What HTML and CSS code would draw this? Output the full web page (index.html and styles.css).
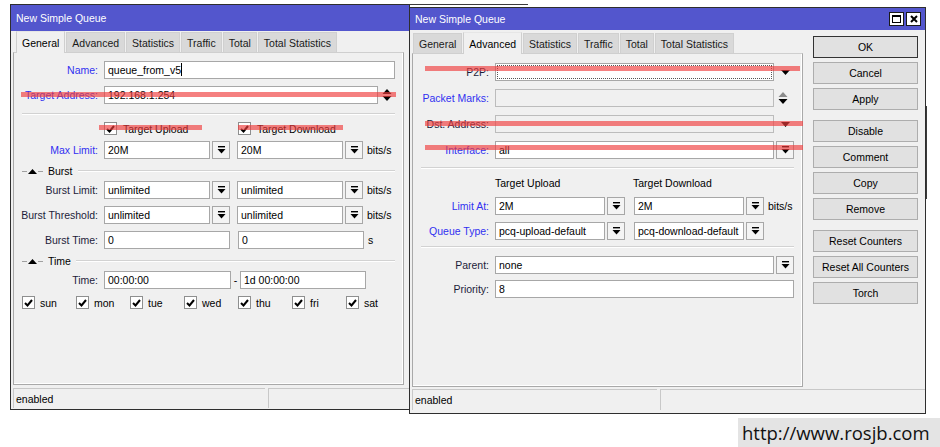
FILE: index.html
```html
<!DOCTYPE html>
<html lang="en">
<head>
    <meta charset="UTF-8">
    <title>New Simple Queue</title>
    <link rel="stylesheet" href="styles.css">
</head>
<body>
<div class="desktop">
    <!-- edges of windows behind -->
    <div class="behind behind-top"></div>
    <div class="behind behind-right"></div>

    <!-- left window : General tab -->
    <div class="window win-general">
        <div class="titlebar">New Simple Queue</div>
        <div class="tabs">
            <div class="tab active">General</div>
            <div class="tab">Advanced</div>
            <div class="tab">Statistics</div>
            <div class="tab">Traffic</div>
            <div class="tab">Total</div>
            <div class="tab">Total Statistics</div>
        </div>
        <div class="panel">
            <div class="row">
                <div class="lbl link">Name:</div>
                <div class="field w-291">queue_from_v5<span class="caret"></span></div>
            </div>
            <div class="row">
                <div class="lbl link">Target Address:</div>
                <div class="field w-274">192.168.1.254</div>
                <svg class="updown" width="10" height="14" viewBox="0 0 10 14"><path d="M5 1l4.5 5h-9z"/><path d="M5 13l4.5-5h-9z"/></svg>
            </div>
            <div class="sep"></div>
            <div class="checks">
                <div class="check w-134">
                    <div class="cb"><svg width="9" height="8" viewBox="0 0 9 8"><path d="M1 4l2.5 2.5L8 1"/></svg></div>
                    <span>Target Upload</span>
                </div>
                <div class="check">
                    <div class="cb"><svg width="9" height="8" viewBox="0 0 9 8"><path d="M1 4l2.5 2.5L8 1"/></svg></div>
                    <span>Target Download</span>
                </div>
            </div>
            <div class="row">
                <div class="lbl link">Max Limit:</div>
                <div class="field w-106">20M</div>
                <div class="ddbtn"><svg width="9" height="8" viewBox="0 0 9 8"><rect x="1" y="0" width="7" height="1.4"/><path d="M0.5 3h8l-4 4.5z"/></svg></div>
                <div class="field w-106 gap">20M</div>
                <div class="ddbtn"><svg width="9" height="8" viewBox="0 0 9 8"><rect x="1" y="0" width="7" height="1.4"/><path d="M0.5 3h8l-4 4.5z"/></svg></div>
                <div class="unit">bits/s</div>
            </div>
            <div class="group">
                <div class="dash"></div>
                <svg width="9" height="5" viewBox="0 0 9 5"><path d="M0 5h9L4.5 0z"/></svg>
                <div class="dash"></div>
                <span>Burst</span>
                <div class="group-line"></div>
            </div>
            <div class="row">
                <div class="lbl">Burst Limit:</div>
                <div class="field w-106">unlimited</div>
                <div class="ddbtn"><svg width="9" height="8" viewBox="0 0 9 8"><rect x="1" y="0" width="7" height="1.4"/><path d="M0.5 3h8l-4 4.5z"/></svg></div>
                <div class="field w-106 gap">unlimited</div>
                <div class="ddbtn"><svg width="9" height="8" viewBox="0 0 9 8"><rect x="1" y="0" width="7" height="1.4"/><path d="M0.5 3h8l-4 4.5z"/></svg></div>
                <div class="unit">bits/s</div>
            </div>
            <div class="row">
                <div class="lbl">Burst Threshold:</div>
                <div class="field w-106">unlimited</div>
                <div class="ddbtn"><svg width="9" height="8" viewBox="0 0 9 8"><rect x="1" y="0" width="7" height="1.4"/><path d="M0.5 3h8l-4 4.5z"/></svg></div>
                <div class="field w-106 gap">unlimited</div>
                <div class="ddbtn"><svg width="9" height="8" viewBox="0 0 9 8"><rect x="1" y="0" width="7" height="1.4"/><path d="M0.5 3h8l-4 4.5z"/></svg></div>
                <div class="unit">bits/s</div>
            </div>
            <div class="row">
                <div class="lbl">Burst Time:</div>
                <div class="field w-126">0</div>
                <div class="field w-126 gap">0</div>
                <div class="unit">s</div>
            </div>
            <div class="group">
                <div class="dash"></div>
                <svg width="9" height="5" viewBox="0 0 9 5"><path d="M0 5h9L4.5 0z"/></svg>
                <div class="dash"></div>
                <span>Time</span>
                <div class="group-line"></div>
            </div>
            <div class="row">
                <div class="lbl">Time:</div>
                <div class="field w-127">00:00:00</div>
                <div class="dash-text">-</div>
                <div class="field w-126">1d 00:00:00</div>
            </div>
            <div class="days">
                <div class="check day"><div class="cb"><svg width="9" height="8" viewBox="0 0 9 8"><path d="M1 4l2.5 2.5L8 1"/></svg></div><span>sun</span></div>
                <div class="check day"><div class="cb"><svg width="9" height="8" viewBox="0 0 9 8"><path d="M1 4l2.5 2.5L8 1"/></svg></div><span>mon</span></div>
                <div class="check day"><div class="cb"><svg width="9" height="8" viewBox="0 0 9 8"><path d="M1 4l2.5 2.5L8 1"/></svg></div><span>tue</span></div>
                <div class="check day"><div class="cb"><svg width="9" height="8" viewBox="0 0 9 8"><path d="M1 4l2.5 2.5L8 1"/></svg></div><span>wed</span></div>
                <div class="check day"><div class="cb"><svg width="9" height="8" viewBox="0 0 9 8"><path d="M1 4l2.5 2.5L8 1"/></svg></div><span>thu</span></div>
                <div class="check day"><div class="cb"><svg width="9" height="8" viewBox="0 0 9 8"><path d="M1 4l2.5 2.5L8 1"/></svg></div><span>fri</span></div>
                <div class="check day"><div class="cb"><svg width="9" height="8" viewBox="0 0 9 8"><path d="M1 4l2.5 2.5L8 1"/></svg></div><span>sat</span></div>
            </div>
        </div>
        <div class="statusbar">
            <div class="status-cell first">enabled</div>
            <div class="status-cell"></div>
        </div>
    </div>

    <!-- right window : Advanced tab -->
    <div class="window win-advanced">
        <div class="titlebar">
            <span>New Simple Queue</span>
            <div class="title-buttons">
                <div class="tbtn"><div class="max-box"></div></div>
                <div class="tbtn"><svg width="8" height="8" viewBox="0 0 8 8"><path d="M1 1l6 6M7 1l-6 6"/></svg></div>
            </div>
        </div>
        <div class="win-body">
            <div class="main-col">
                <div class="tabs">
                    <div class="tab">General</div>
                    <div class="tab active">Advanced</div>
                    <div class="tab">Statistics</div>
                    <div class="tab">Traffic</div>
                    <div class="tab">Total</div>
                    <div class="tab">Total Statistics</div>
                </div>
                <div class="panel">
                    <div class="row r26">
                        <div class="lbl">P2P:</div>
                        <div class="field w-279 focus"><div class="focus-ring"></div></div>
                        <svg class="arrow" width="9" height="5" viewBox="0 0 9 5"><path d="M0 0h9L4.5 5z"/></svg>
                    </div>
                    <div class="row r26">
                        <div class="lbl link">Packet Marks:</div>
                        <div class="field w-279 disabled"></div>
                        <svg class="updown" width="10" height="14" viewBox="0 0 10 14"><path d="M5 1l4.5 5h-9z" fill="#8c8c8c"/><path d="M5 13l4.5-5h-9z"/></svg>
                    </div>
                    <div class="row r26">
                        <div class="lbl">Dst. Address:</div>
                        <div class="field w-279 disabled"></div>
                        <svg class="arrow" width="9" height="5" viewBox="0 0 9 5"><path d="M0 0h9L4.5 5z"/></svg>
                    </div>
                    <div class="row r26">
                        <div class="lbl link">Interface:</div>
                        <div class="field w-279">all</div>
                        <div class="ddbtn"><svg width="9" height="8" viewBox="0 0 9 8"><rect x="1" y="0" width="7" height="1.4"/><path d="M0.5 3h8l-4 4.5z"/></svg></div>
                    </div>
                    <div class="sep sep-r"></div>
                    <div class="heads">
                        <div class="head w-138">Target Upload</div>
                        <div class="head">Target Download</div>
                    </div>
                    <div class="row">
                        <div class="lbl link">Limit At:</div>
                        <div class="field w-110">2M</div>
                        <div class="ddbtn"><svg width="9" height="8" viewBox="0 0 9 8"><rect x="1" y="0" width="7" height="1.4"/><path d="M0.5 3h8l-4 4.5z"/></svg></div>
                        <div class="field w-110 gap-r">2M</div>
                        <div class="ddbtn"><svg width="9" height="8" viewBox="0 0 9 8"><rect x="1" y="0" width="7" height="1.4"/><path d="M0.5 3h8l-4 4.5z"/></svg></div>
                        <div class="unit">bits/s</div>
                    </div>
                    <div class="row">
                        <div class="lbl link">Queue Type:</div>
                        <div class="field w-110">pcq-upload-default</div>
                        <div class="ddbtn"><svg width="9" height="8" viewBox="0 0 9 8"><rect x="1" y="0" width="7" height="1.4"/><path d="M0.5 3h8l-4 4.5z"/></svg></div>
                        <div class="field w-110 gap-r">pcq-download-default</div>
                        <div class="ddbtn"><svg width="9" height="8" viewBox="0 0 9 8"><rect x="1" y="0" width="7" height="1.4"/><path d="M0.5 3h8l-4 4.5z"/></svg></div>
                    </div>
                    <div class="sep sep-r2"></div>
                    <div class="row">
                        <div class="lbl">Parent:</div>
                        <div class="field w-279">none</div>
                        <div class="ddbtn"><svg width="9" height="8" viewBox="0 0 9 8"><rect x="1" y="0" width="7" height="1.4"/><path d="M0.5 3h8l-4 4.5z"/></svg></div>
                    </div>
                    <div class="row r24">
                        <div class="lbl">Priority:</div>
                        <div class="field w-299">8</div>
                    </div>
                </div>
            </div>
            <div class="buttons">
                <div class="btn default">OK</div>
                <div class="btn">Cancel</div>
                <div class="btn">Apply</div>
                <div class="btn spaced">Disable</div>
                <div class="btn">Comment</div>
                <div class="btn">Copy</div>
                <div class="btn">Remove</div>
                <div class="btn spaced">Reset Counters</div>
                <div class="btn">Reset All Counters</div>
                <div class="btn">Torch</div>
            </div>
        </div>
        <div class="statusbar">
            <div class="status-cell first-r">enabled</div>
            <div class="status-cell"></div>
        </div>
    </div>

    <!-- red strike marks drawn over the screenshot -->
    <div class="strike s-target-addr"></div>
    <div class="strike s-upload"></div>
    <div class="strike s-download"></div>
    <div class="strike s-p2p"></div>
    <div class="strike s-dst"></div>
    <div class="strike s-iface"></div>

    <div class="watermark">http://www.rosjb.com</div>
</div>
</body>
</html>
```

FILE: styles.css
```css
* {
    margin: 0;
    padding: 0;
    box-sizing: border-box;
}

body {
    background-color: #ffffff;
    color: #000000;
    font-family: 'Liberation Sans', Arial, sans-serif;
    font-size: 10.5px;
}

.desktop {
    position: relative;
    width: 940px;
    height: 447px;
    overflow: hidden;
}

/* windows behind */
.behind {
    position: absolute;
    background-color: #3a3a3a;
}

.behind-top {
    left: 400px;
    top: 4px;
    width: 128px;
    height: 1px;
}

.behind-right {
    left: 926px;
    top: 107px;
    width: 1px;
    height: 92px;
    box-shadow: 0 -1px 0 #3a3a3a;
}

/* window frame */
.window {
    position: absolute;
    display: flex;
    flex-direction: column;
    background-color: #f0f0f0;
    border: 1px solid #2e2e2e;
}

.win-general {
    left: 10px;
    top: 4px;
    width: 400px;
    height: 406px;
}

.win-advanced {
    left: 409px;
    top: 7px;
    width: 517px;
    height: 407px;
}

.titlebar {
    display: flex;
    align-items: center;
    justify-content: space-between;
    height: 26px;
    padding: 0 4px 0 5px;
    background-color: #5356cd;
    color: #ffffff;
    font-size: 10.5px;
}

.win-advanced .titlebar {
    height: 22px;
}

.title-buttons {
    display: flex;
    gap: 2px;
}

.tbtn {
    width: 15px;
    height: 14px;
    background-color: #ffffff;
    border: 1px solid #1a1a1a;
    display: flex;
    align-items: center;
    justify-content: center;
}

.tbtn svg path {
    stroke: #000000;
    stroke-width: 2;
}

.max-box {
    width: 9px;
    height: 8px;
    border: 1px solid #000000;
    border-top-width: 2px;
}

/* tabs */
.tabs {
    display: flex;
    height: 21px;
    padding-left: 5px;
    gap: 1px;
}

.tab {
    margin-top: 1px;
    padding: 0 5px;
    display: flex;
    align-items: center;
    background-color: #d9d9d9;
    border: 1px solid #d0d0d0;
    border-bottom: none;
    color: #1a1a1a;
}

.tab.active {
    margin-top: 0;
    background-color: #f0f0f0;
    border-color: #cfcfcf;
    border-top-color: #e6e6e6;
    color: #000000;
    position: relative;
    z-index: 1;
    margin-bottom: -1px;
}

.win-advanced .tabs {
    height: 23px;
    padding-left: 3px;
}

.win-advanced .tab {
    margin-top: 3px;
}

.win-advanced .tab.active {
    margin-top: 2px;
}

/* content panel */
.panel {
    margin-left: 2px;
    width: 391px;
    height: 333px;
    padding-top: 4px;
    border: 1px solid #a9a9a9;
    border-top-color: #cfcfcf;
    box-shadow: inset -1px -1px 0 #ffffff;
}

.win-advanced .panel {
    height: 334px;
    padding-top: 5px;
}

.row {
    display: flex;
    align-items: center;
    height: 25px;
}

.row.r26 {
    height: 26px;
}

.row.r24 {
    height: 24px;
}

.lbl {
    width: 84px;
    margin-right: 6px;
    text-align: right;
    white-space: nowrap;
    color: #1c1c3a;
}

.win-advanced .lbl {
    width: 76px;
}

.lbl.link {
    color: #3030f0;
}

.field {
    height: 18px;
    padding: 0 3px;
    display: flex;
    align-items: center;
    background-color: #ffffff;
    border: 1px solid #a7a7a7;
    white-space: nowrap;
    overflow: hidden;
    position: relative;
}

.field.disabled {
    background-color: #f0f0f0;
    border-color: #bcbcbc;
}

.focus-ring {
    position: absolute;
    inset: 1px;
    border: 1px dotted #555555;
}

.caret {
    display: inline-block;
    width: 1px;
    height: 13px;
    background-color: #000000;
}

.w-106 { width: 106px; }
.w-110 { width: 110px; }
.w-126 { width: 126px; }
.w-127 { width: 127px; }
.w-274 { width: 274px; }
.w-279 { width: 279px; }
.w-291 { width: 291px; }
.w-299 { width: 299px; }

.field.gap {
    margin-left: 7px;
}

.field.gap-r {
    margin-left: 9px;
}

.w-126 + .w-126.gap {
    margin-left: 8px;
}

.ddbtn {
    width: 18px;
    height: 18px;
    margin-left: 2px;
    display: flex;
    align-items: center;
    justify-content: center;
    background-color: #f4f4f4;
    border: 1px solid #a7a7a7;
}

.updown {
    margin-left: 4px;
}

.arrow {
    margin-left: 7px;
}

.unit {
    margin-left: 4px;
}

.dash-text {
    width: 9px;
    text-align: center;
}

.sep {
    height: 13px;
    margin: 0 8px;
    position: relative;
}

.sep::after {
    content: '';
    position: absolute;
    left: 0;
    right: 0;
    top: 6px;
    border-top: 1px solid #d2d2d2;
    border-bottom: 1px solid #ffffff;
}

.sep-r {
    height: 10px;
}

.sep-r::after {
    top: 4px;
}

.sep-r2 {
    height: 9px;
}

.sep-r2::after {
    top: 3px;
}

/* checkboxes */
.checks {
    display: flex;
    align-items: center;
    height: 17px;
    padding-left: 90px;
}

.check {
    display: flex;
    align-items: center;
    gap: 6px;
}

.w-134 { width: 134px; }

.cb {
    width: 13px;
    height: 13px;
    display: flex;
    align-items: center;
    justify-content: center;
    background-color: #ffffff;
    border: 1px solid #8e8f8f;
}

.cb svg path {
    fill: none;
    stroke: #000000;
    stroke-width: 2;
}

.days {
    display: flex;
    align-items: center;
    height: 21px;
    padding-left: 8px;
}

.check.day {
    width: 54px;
    gap: 5px;
}

/* group header */
.group {
    display: flex;
    align-items: center;
    height: 15px;
    padding: 3px 8px 0 7px;
}

.dash {
    width: 5px;
    border-top: 1px solid #a0a0a0;
    margin: 0 1px;
}

.group span {
    margin-left: 4px;
}

.group-line {
    flex: 1;
    margin-left: 5px;
    border-top: 1px solid #d2d2d2;
    border-bottom: 1px solid #ffffff;
}

/* right window */
.win-body {
    display: flex;
}

.main-col {
    width: 398px;
}

.heads {
    display: flex;
    align-items: center;
    height: 20px;
    padding-left: 82px;
}

.w-138 { width: 138px; }

.buttons {
    display: flex;
    flex-direction: column;
    gap: 4px;
    margin-top: 6px;
    margin-left: 5px;
}

.btn {
    width: 105px;
    height: 22px;
    display: flex;
    align-items: center;
    justify-content: center;
    background-color: #e1e1e1;
    border: 1px solid #adadad;
    color: #000000;
}

.btn.default {
    border: 1px solid #333333;
}

.btn.spaced {
    margin-top: 6px;
}

/* status bar */
.statusbar {
    display: flex;
    height: 20px;
    margin-top: 3px;
    margin-left: 2px;
    gap: 3px;
}

.win-advanced .statusbar {
    height: 21px;
    margin-top: 2px;
}

.status-cell {
    flex: 1;
    display: flex;
    align-items: center;
    padding-left: 2px;
    border-top: 1px solid #c8c8c8;
    border-left: 1px solid #c8c8c8;
}

.status-cell.first {
    flex: none;
    width: 252px;
}

.status-cell.first-r {
    flex: none;
    width: 245px;
}

/* red marks */
.strike {
    position: absolute;
    height: 5px;
    background-color: rgba(240, 60, 60, 0.65);
}

.s-target-addr { left: 21px; top: 92px; width: 375px; }
.s-upload { left: 99px; top: 125px; width: 103px; }
.s-download { left: 238px; top: 125px; width: 105px; }
.s-p2p { left: 425px; top: 66px; width: 375px; }
.s-dst { left: 425px; top: 121px; width: 378px; }
.s-iface { left: 425px; top: 145px; width: 378px; }

.watermark {
    position: absolute;
    left: 738px;
    top: 418px;
    width: 202px;
    height: 29px;
    padding-left: 4px;
    display: flex;
    align-items: center;
    background-color: #e4e4e4;
    font-family: 'Open Sans', 'DejaVu Sans', sans-serif;
    font-size: 18.5px;
    white-space: nowrap;
    color: #111111;
}
```
